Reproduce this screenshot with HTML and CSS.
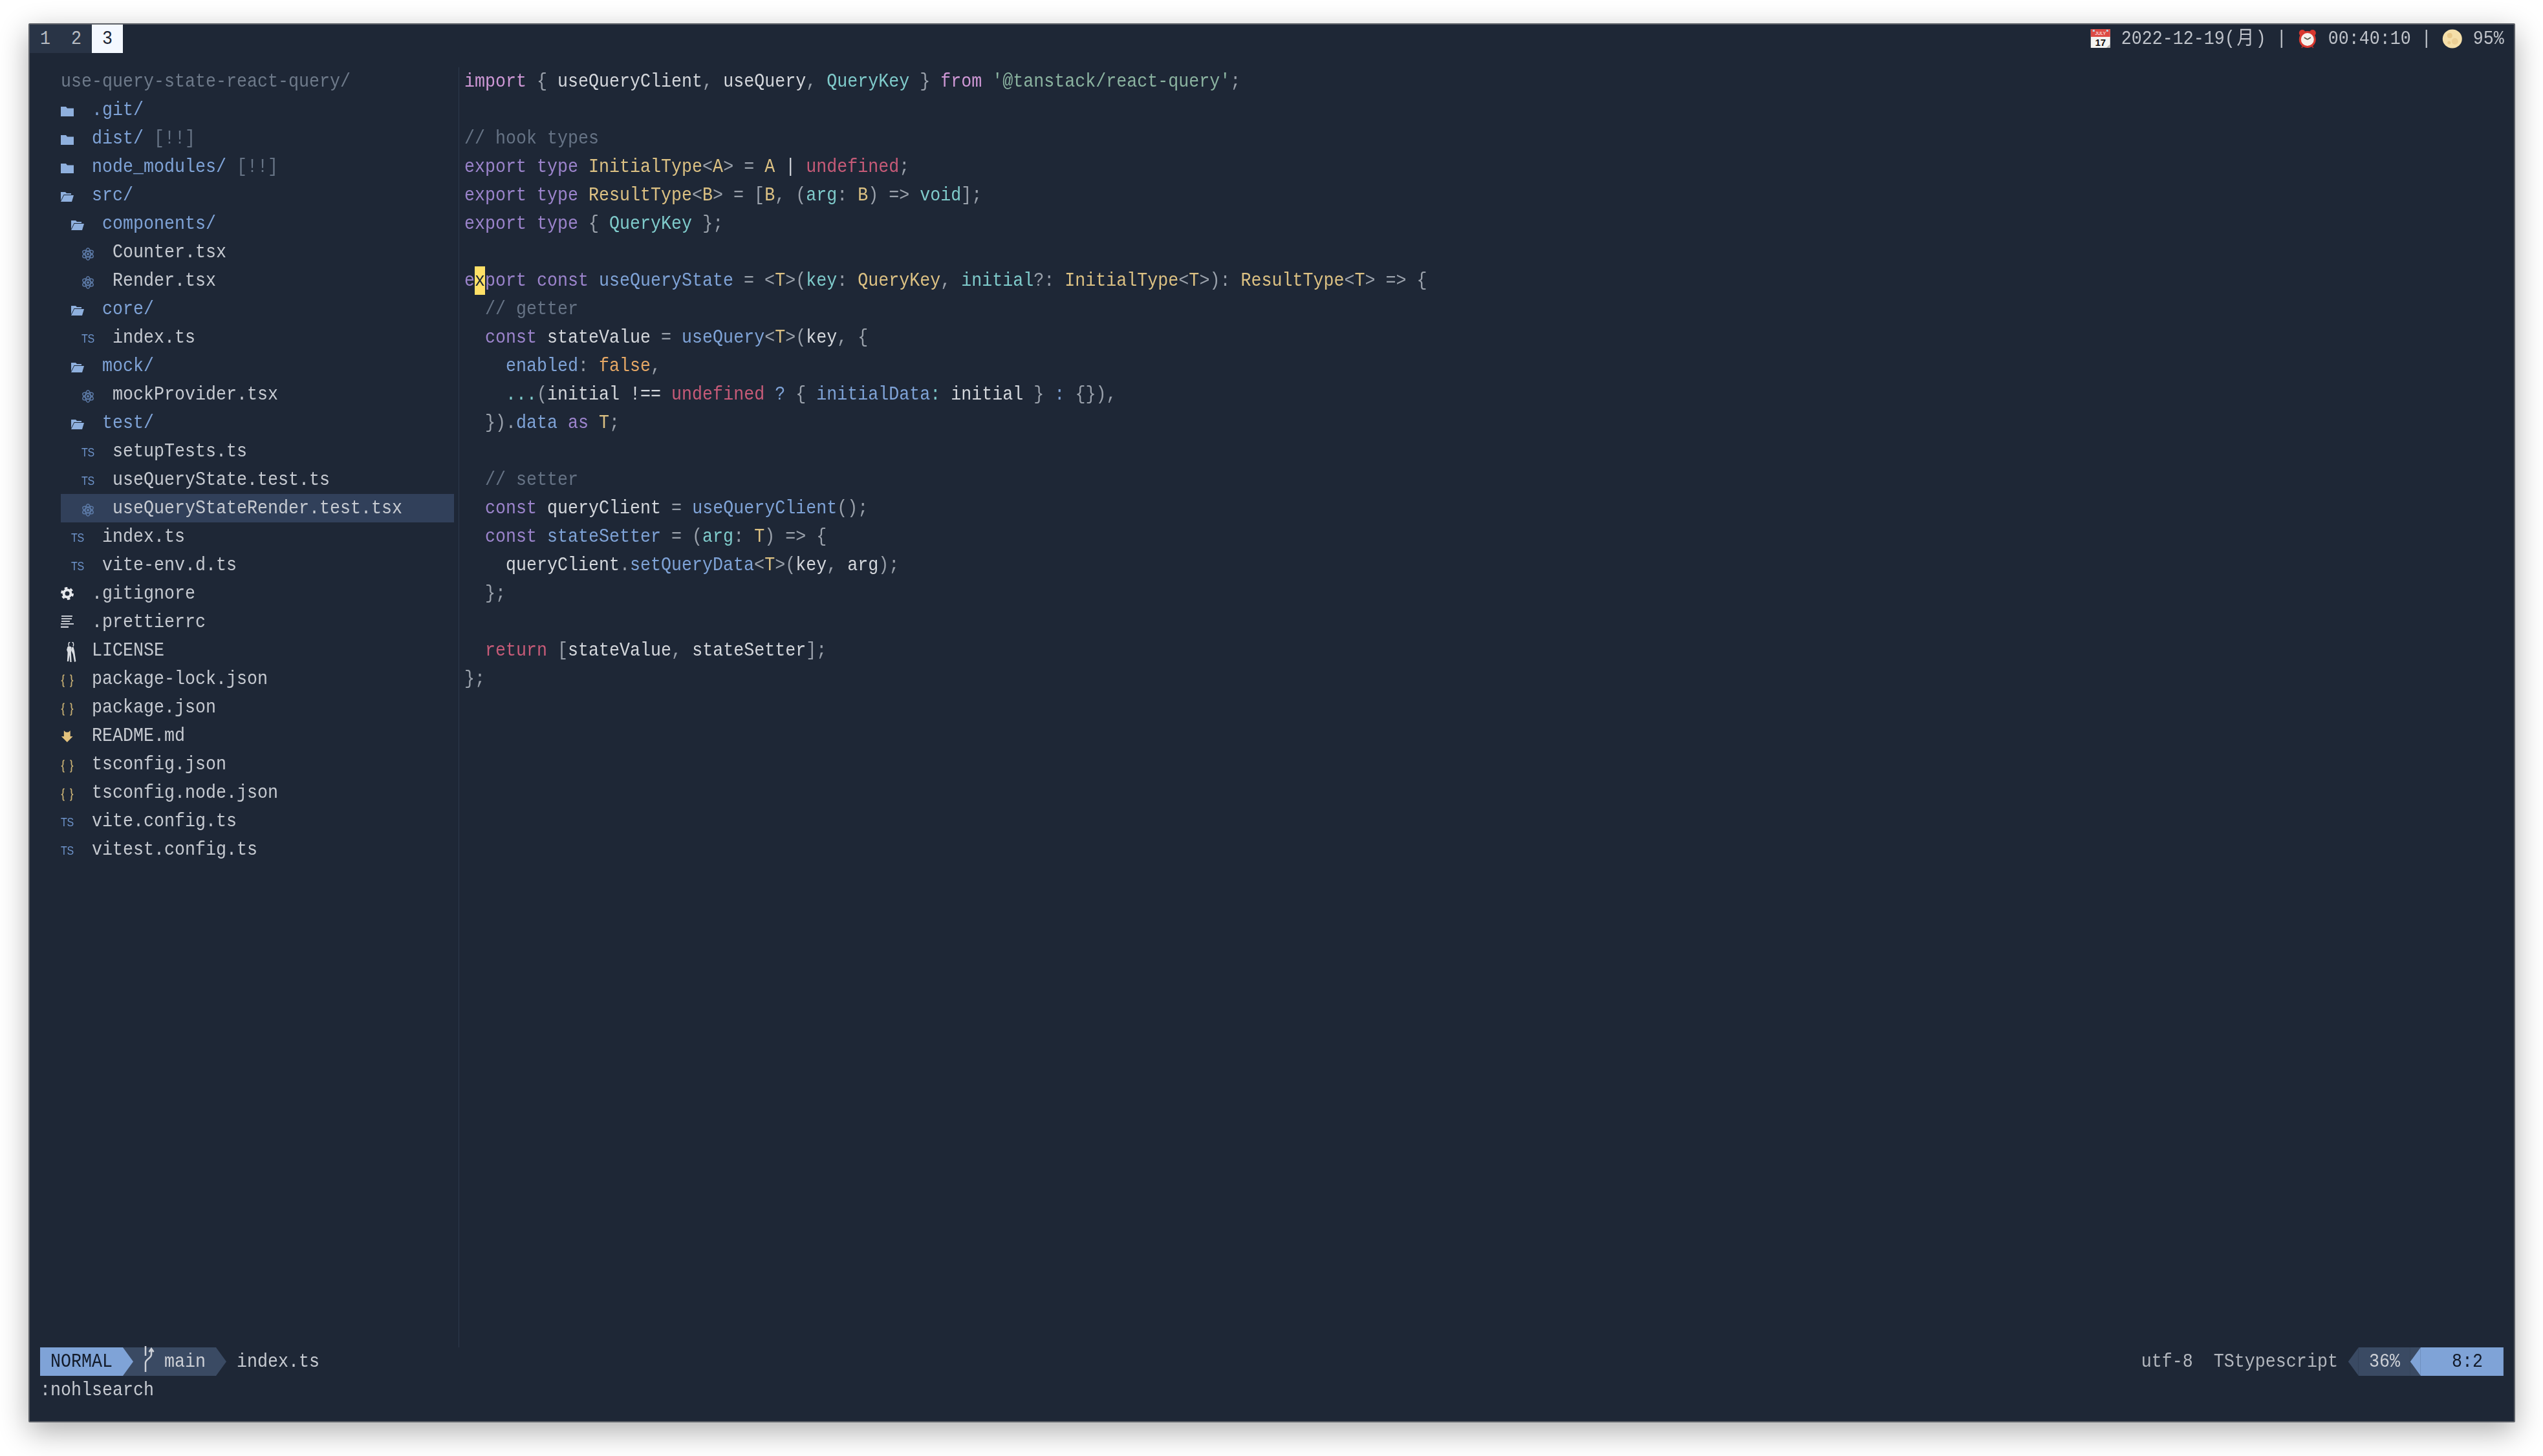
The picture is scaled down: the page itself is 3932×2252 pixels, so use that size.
FILE: index.html
```html
<!DOCTYPE html>
<html lang="en">
<head>
<meta charset="utf-8">
<title>nvim - use-query-state-react-query</title>
<link rel="stylesheet" href="styles.css">
</head>
<body>
<svg class="defs" width="0" height="0" aria-hidden="true">
  <defs>
    <symbol id="i-folder" viewBox="0 0 20 15" preserveAspectRatio="none"><path d="M0 0h8l2 2.5h10V15H0z"/></symbol>
    <symbol id="i-open" viewBox="0 0 20 15" preserveAspectRatio="none"><path d="M0 0h7l2 2h7v2H4.5L0 13z"/><path d="M5 5h15l-3 10H0z"/></symbol>
    <symbol id="i-react" viewBox="0 0 20 20" preserveAspectRatio="none"><g fill="none" stroke="currentColor" stroke-width="1.5"><ellipse cx="10" cy="10" rx="9.2" ry="4" transform="rotate(90 10 10)"/><ellipse cx="10" cy="10" rx="9.2" ry="4" transform="rotate(30 10 10)"/><ellipse cx="10" cy="10" rx="9.2" ry="4" transform="rotate(150 10 10)"/></g><circle cx="10" cy="10" r="2" fill="currentColor"/></symbol>
    <symbol id="i-json" viewBox="0 0 20 20" preserveAspectRatio="none"><path fill="none" stroke="currentColor" stroke-width="1.8" d="M5.5 1C3 1 3.5 3 3.5 6S3 9.500 1 10c2 .5 2.500 1 2.500 4s-.5 5 2 5M14.500 1c2.500 0 2 2 2 5s.5 3.500 2.500 4c-2 .5-2.500 1-2.500 4s.5 5-2 5"/></symbol>
  </defs>
</svg>
<main class="window">
  <div class="screen">
    <header class="tabline">
      <nav class="tabs">
        <span class="tab">1</span><span class="tab">2</span><span class="tab tab-active">3</span>
      </nav>
      <div class="clock">
        <svg class="emoji" viewBox="0 0 32 30" preserveAspectRatio="none" aria-hidden="true">
          <rect x="1" y="0" width="30" height="29" fill="#f4f4f2"/>
          <rect x="1" y="0" width="30" height="12" fill="#dd4b44"/>
          <rect x="4" y="1" width="3" height="3" fill="#b9d3e6"/><rect x="25" y="1" width="3" height="3" fill="#b9d3e6"/>
          <text class="emoji-tiny" x="16" y="9" text-anchor="middle">JULY</text>
          <text class="emoji-num" x="16" y="26" text-anchor="middle">17</text>
          <path d="M25 29l6-6v6z" fill="#b5b5b5"/>
        </svg>
        <span class="gap"></span><span>2022-12-19(</span><span class="wide">月</span><span>) | </span>
        <svg class="emoji" viewBox="0 0 32 30" preserveAspectRatio="none" aria-hidden="true">
          <circle cx="8" cy="6" r="5" fill="#d8382f"/><circle cx="24" cy="6" r="5" fill="#d8382f"/>
          <path d="M7 29l3-4M25 29l-3-4" stroke="#a5302a" stroke-width="2"/>
          <circle cx="16" cy="16" r="11.500" fill="#f6f1ec" stroke="#d8382f" stroke-width="3"/>
          <path d="M16 16l-5-3M16 16l5-3" stroke="#554" stroke-width="1.800"/>
        </svg>
        <span class="gap"></span><span>00:40:10 | </span>
        <svg class="emoji" viewBox="0 0 32 30" preserveAspectRatio="none" aria-hidden="true">
          <ellipse cx="16" cy="15" rx="15" ry="14.500" fill="#f5dfa9"/>
          <circle cx="12" cy="10" r="4" fill="#e8c98a"/><circle cx="20" cy="19" r="5" fill="#ebcf95"/><circle cx="11" cy="21" r="2.500" fill="#e8c98a"/>
        </svg>
        <span class="gap"></span><span>95%</span>
      </div>
    </header>

    <div class="panes">
      <aside class="tree">
        <div class="row root">use-query-state-react-query/</div>
        <div class="row dir"><svg class="ic ic-folder"><use href="#i-folder"/></svg><span>.git/</span></div>
        <div class="row dir"><svg class="ic ic-folder"><use href="#i-folder"/></svg><span>dist/</span><span class="ign"> [!!]</span></div>
        <div class="row dir"><svg class="ic ic-folder"><use href="#i-folder"/></svg><span>node_modules/</span><span class="ign"> [!!]</span></div>
        <div class="row dir"><svg class="ic ic-folder"><use href="#i-open"/></svg><span>src/</span></div>
        <div class="row d1 dir"><svg class="ic ic-folder"><use href="#i-open"/></svg><span>components/</span></div>
        <div class="row d2"><svg class="ic ic-react"><use href="#i-react"/></svg><span>Counter.tsx</span></div>
        <div class="row d2"><svg class="ic ic-react"><use href="#i-react"/></svg><span>Render.tsx</span></div>
        <div class="row d1 dir"><svg class="ic ic-folder"><use href="#i-open"/></svg><span>core/</span></div>
        <div class="row d2"><span class="ic-ts">TS</span><span>index.ts</span></div>
        <div class="row d1 dir"><svg class="ic ic-folder"><use href="#i-open"/></svg><span>mock/</span></div>
        <div class="row d2"><svg class="ic ic-react"><use href="#i-react"/></svg><span>mockProvider.tsx</span></div>
        <div class="row d1 dir"><svg class="ic ic-folder"><use href="#i-open"/></svg><span>test/</span></div>
        <div class="row d2"><span class="ic-ts">TS</span><span>setupTests.ts</span></div>
        <div class="row d2"><span class="ic-ts">TS</span><span>useQueryState.test.ts</span></div>
        <div class="row d2 selected"><svg class="ic ic-react"><use href="#i-react"/></svg><span>useQueryStateRender.test.tsx</span></div>
        <div class="row d1"><span class="ic-ts">TS</span><span>index.ts</span></div>
        <div class="row d1"><span class="ic-ts">TS</span><span>vite-env.d.ts</span></div>
        <div class="row"><svg class="ic ic-gear" viewBox="0 0 20 20" preserveAspectRatio="none"><circle cx="10" cy="10" r="5.500" fill="none" stroke="currentColor" stroke-width="4"/><circle cx="10" cy="10" r="8.500" fill="none" stroke="currentColor" stroke-width="3" stroke-dasharray="4.500 4.400"/></svg><span>.gitignore</span></div>
        <div class="row"><svg class="ic ic-lines" viewBox="0 0 20 20" preserveAspectRatio="none"><path fill="currentColor" d="M1 0h17v2H1zM1 4h16v2H1zM1 8h13v2H1zM0 12h20v2H0zM0 16.500h12V19H0z"/></svg><span>.prettierrc</span></div>
        <div class="row"><svg class="ic ic-key" viewBox="0 0 26 31" preserveAspectRatio="none"><path fill="none" stroke="currentColor" stroke-width="2" d="M10 7a5 5 0 1 1 8 0"/><path fill="currentColor" d="M7 7h7l1 5-1 4 1 15h-3l-1-11-2 10H6l1-14-2-4zM15 8h4l2 6 3 16-3 1-3-12-3-5z"/></svg><span>LICENSE</span></div>
        <div class="row"><svg class="ic ic-json"><use href="#i-json"/></svg><span>package-lock.json</span></div>
        <div class="row"><svg class="ic ic-json"><use href="#i-json"/></svg><span>package.json</span></div>
        <div class="row"><svg class="ic ic-md" viewBox="0 0 18 18" preserveAspectRatio="none"><path fill="currentColor" d="M4 0l3 2.500h4L14 0v9h4l-9 9-9-9h4z"/></svg><span>README.md</span></div>
        <div class="row"><svg class="ic ic-json"><use href="#i-json"/></svg><span>tsconfig.json</span></div>
        <div class="row"><svg class="ic ic-json"><use href="#i-json"/></svg><span>tsconfig.node.json</span></div>
        <div class="row"><span class="ic-ts">TS</span><span>vite.config.ts</span></div>
        <div class="row"><span class="ic-ts">TS</span><span>vitest.config.ts</span></div>
      </aside>
      <div class="divider"></div>
      <section class="code">
<div class="ln"><span class="imp">import</span> <span class="p">{</span> <span class="w">useQueryClient</span><span class="p">,</span> <span class="w">useQuery</span><span class="p">,</span> <span class="cy">QueryKey</span> <span class="p">}</span> <span class="imp">from</span> <span class="st">'@tanstack/react-query'</span><span class="p">;</span></div>
<div class="ln"></div>
<div class="ln cm">// hook types</div>
<div class="ln"><span class="kw">export type</span> <span class="ty">InitialType</span><span class="p">&lt;</span><span class="ty">A</span><span class="p">&gt; =</span> <span class="ty">A</span> <span class="w">|</span> <span class="rd">undefined</span><span class="p">;</span></div>
<div class="ln"><span class="kw">export type</span> <span class="ty">ResultType</span><span class="p">&lt;</span><span class="ty">B</span><span class="p">&gt; = [</span><span class="ty">B</span><span class="p">, (</span><span class="cy">arg</span><span class="p">:</span> <span class="ty">B</span><span class="p">) =&gt;</span> <span class="cy">void</span><span class="p">];</span></div>
<div class="ln"><span class="kw">export type</span> <span class="p">{</span> <span class="cy">QueryKey</span> <span class="p">};</span></div>
<div class="ln"></div>
<div class="ln"><span class="kw">e</span><span class="cursor">x</span><span class="kw">port const</span> <span class="fn">useQueryState</span> <span class="p">= &lt;</span><span class="ty">T</span><span class="p">&gt;(</span><span class="cy">key</span><span class="p">:</span> <span class="ty">QueryKey</span><span class="p">,</span> <span class="cy">initial</span><span class="p">?:</span> <span class="ty">InitialType</span><span class="p">&lt;</span><span class="ty">T</span><span class="p">&gt;):</span> <span class="ty">ResultType</span><span class="p">&lt;</span><span class="ty">T</span><span class="p">&gt; =&gt; {</span></div>
<div class="ln cm">  // getter</div>
<div class="ln">  <span class="kw">const</span> <span class="w">stateValue</span> <span class="p">=</span> <span class="fn">useQuery</span><span class="p">&lt;</span><span class="ty">T</span><span class="p">&gt;(</span><span class="w">key</span><span class="p">, {</span></div>
<div class="ln">    <span class="fn">enabled</span><span class="p">:</span> <span class="or">false</span><span class="p">,</span></div>
<div class="ln">    <span class="cy">...</span><span class="p">(</span><span class="w">initial</span> <span class="w">!==</span> <span class="rd">undefined</span> <span class="fn">?</span> <span class="p">{</span> <span class="fn">initialData</span><span class="cy">:</span> <span class="w">initial</span> <span class="p">}</span> <span class="fn">:</span> <span class="p">{}),</span></div>
<div class="ln">  <span class="p">}).</span><span class="fn">data</span> <span class="kw">as</span> <span class="ty">T</span><span class="p">;</span></div>
<div class="ln"></div>
<div class="ln cm">  // setter</div>
<div class="ln">  <span class="kw">const</span> <span class="w">queryClient</span> <span class="p">=</span> <span class="fn">useQueryClient</span><span class="p">();</span></div>
<div class="ln">  <span class="kw">const</span> <span class="fn">stateSetter</span> <span class="p">= (</span><span class="cy">arg</span><span class="p">:</span> <span class="ty">T</span><span class="p">) =&gt; {</span></div>
<div class="ln">    <span class="w">queryClient</span><span class="p">.</span><span class="fn">setQueryData</span><span class="p">&lt;</span><span class="ty">T</span><span class="p">&gt;(</span><span class="w">key</span><span class="p">,</span> <span class="w">arg</span><span class="p">);</span></div>
<div class="ln p">  };</div>
<div class="ln"></div>
<div class="ln">  <span class="rd">return</span> <span class="p">[</span><span class="w">stateValue</span><span class="p">,</span> <span class="w">stateSetter</span><span class="p">];</span></div>
<div class="ln p">};</div>
      </section>
    </div>

    <footer class="status">
      <span class="seg seg-mode">NORMAL</span>
      <span class="arrow arrow-r on-dark"></span>
      <span class="seg seg-git">
        <svg class="ic-git" viewBox="0 0 16 40" preserveAspectRatio="none" aria-hidden="true"><path fill="none" stroke="currentColor" stroke-width="2.500" d="M3 0v15M3 40V26c0-6 9-7 9-13V5M8.500 9L12 4l3.500 5"/></svg>
        <span>main</span>
      </span>
      <span class="arrow arrow-r on-bg"></span>
      <span class="file">index.ts</span>
      <span class="info">utf-8</span>
      <span class="info info-type">TStypescript</span>
      <span class="arrow arrow-l on-bg-l"></span>
      <span class="seg seg-pct">36%</span>
      <span class="arrow arrow-l on-dark-l"></span>
      <span class="seg seg-pos">8:2</span>
    </footer>
    <div class="cmdline">:nohlsearch</div>
  </div>
</main>
</body>
</html>
```

FILE: styles.css
```css
:root {
  --bg: #1e2736;
  --fg: #c6cad1;
  --blue: #7fa3d7;
  --dark: #3a4a63;
  --cell: 18px;
}

* { box-sizing: border-box; }

html, body {
  margin: 0;
  height: 100%;
}

body {
  width: 3932px;
  height: 2252px;
  padding: 36px 43px 0 44px;
  background: #fff;
  overflow: hidden;
}

.defs { position: absolute; }

.window {
  width: 3845px;
  height: 2164px;
  background: var(--bg);
  border: 2px solid #5d6168;
  border-radius: 2px;
  box-shadow: 0 14px 46px rgba(0, 0, 0, .32);
  overflow: hidden;
}

/* Terminal grid: the cell font is condensed horizontally to a 16px pitch */
.screen {
  width: 4321px;
  height: 2160px;
  transform: scaleX(.88889);
  transform-origin: 0 0;
  font: 30px/44px "Liberation Mono", "Noto Sans CJK JP", monospace;
  color: var(--fg);
}

.ln, .row span, .clock span { white-space: pre; }

/* Tab line */
.tabline {
  display: flex;
  justify-content: space-between;
  height: 44px;
}

.tabs {
  display: flex;
  background: #293446;
  height: 44px;
}

.tab {
  width: 54px;
  text-align: center;
  color: #b7bbc2;
}

.tab-active {
  background: #f4f8ff;
  color: #1e2736;
}

.clock {
  display: flex;
  align-items: center;
  padding-right: 17px;
  color: #bfc3ca;
}

.gap { width: var(--cell); }

.clock .wide {
  display: inline-block;
  width: 36px;
  text-align: center;
}

.emoji {
  width: 36px;
  height: 30px;
  flex: none;
}

.emoji-tiny {
  font: 7px "Liberation Sans", sans-serif;
  fill: #fff;
}

.emoji-num {
  font: bold 15px "Liberation Sans", sans-serif;
  fill: #111;
}

/* Panes */
.panes {
  display: flex;
  height: 1980px;
  margin-top: 22px;
  padding-left: var(--cell);
}

.tree {
  width: 720px;
  padding-left: 36px;
  flex: none;
}

.row {
  display: flex;
  align-items: center;
  height: 44px;
}

.d1 { padding-left: 18px; }
.d2 { padding-left: 36px; }

.root { color: #6e7a8a; }
.dir { color: var(--blue); }
.ign { color: #667385; }
.selected { background: #31405a; }

.ic {
  width: 22.5px;
  margin-right: 31.5px;
  flex: none;
}

.ic-folder { height: 15px; margin-top: 5px; color: #8fb0de; fill: currentColor; }
.ic-react { height: 20px; margin-top: 6px; color: #5d7ba8; }
.ic-json { height: 20px; margin-top: 5px; color: #c9b174; }
.ic-gear { height: 20px; margin-top: 0; color: #e6e8ec; }
.ic-lines { height: 20px; margin-top: 0; color: #c4c8cf; }
.ic-md { height: 18px; margin-top: 2px; color: #e3c27d; width: 20px; margin-left: 1px; margin-right: 33px; }
.ic-key { height: 31px; width: 22px; margin-left: 6px; margin-right: 26px; margin-top: 4px; color: #d9dce1; }

.row .ic-ts {
  width: 54px;
  flex: none;
  font: 18px/20px "Liberation Sans", sans-serif;
  letter-spacing: -.3px;
  color: #6f95cc;
  margin-top: 4px;
}

.divider {
  width: var(--cell);
  flex: none;
  position: relative;
}

.divider::before {
  content: "";
  display: block;
  width: 1px;
  height: 100%;
  margin-left: 8px;
  background: #303c4f;
}

/* Code */
.code { flex: 1; }
.ln { height: 44px; }

.p { color: #9aa1ab; }
.w { color: #d4d7dc; }
.imp { color: #cf98d6; }
.kw { color: #9c84cc; }
.ty { color: #dcc183; }
.cy { color: #7fcbcb; }
.fn { color: #7fa3d7; }
.rd { color: #c75b78; }
.or { color: #e6a865; }
.st { color: #8bb3a0; }
.cm { color: #667385; }

.cursor {
  display: inline-block;
  width: var(--cell);
  height: 44px;
  background: #ffe067;
  color: #1e2736;
  vertical-align: top;
}

/* Status line */
.status {
  display: flex;
  height: 44px;
  padding: 0 18px;
}

.seg { display: block; height: 44px; }

.seg-mode {
  width: 144px;
  padding-left: 18px;
  background: var(--blue);
  color: #121a29;
}

.seg-git {
  display: flex;
  width: 144px;
  padding-left: 18px;
  background: var(--dark);
  color: #cdd0d6;
}

.ic-git {
  width: 18px;
  height: 40px;
  margin: -2px 18px 0 0;
  flex: none;
  overflow: visible;
}

.file { margin-left: 18px; }

.info { color: #b3b7be; }
.file + .info { margin-left: auto; }
.info-type { margin-left: 36px; margin-right: 18px; }

.seg-pct {
  width: 90px;
  padding-left: 18px;
  background: var(--dark);
  color: #cdd0d6;
}

.seg-pos {
  width: 144px;
  padding-left: 54px;
  background: var(--blue);
  color: #121a29;
}

.arrow {
  width: var(--cell);
  height: 44px;
  flex: none;
}

.arrow::before {
  content: "";
  display: block;
  width: 100%;
  height: 100%;
}

.arrow-r::before { clip-path: polygon(0 0, 100% 50%, 0 100%); }
.arrow-l::before { clip-path: polygon(100% 0, 0 50%, 100% 100%); }

.on-dark { background: var(--dark); }
.on-dark::before { background: var(--blue); }
.on-bg::before { background: var(--dark); }
.on-bg-l::before { background: var(--dark); }
.on-dark-l { background: var(--dark); }
.on-dark-l::before { background: var(--blue); }

.cmdline {
  height: 44px;
  padding-left: 18px;
  color: #c6cad1;
}
```
